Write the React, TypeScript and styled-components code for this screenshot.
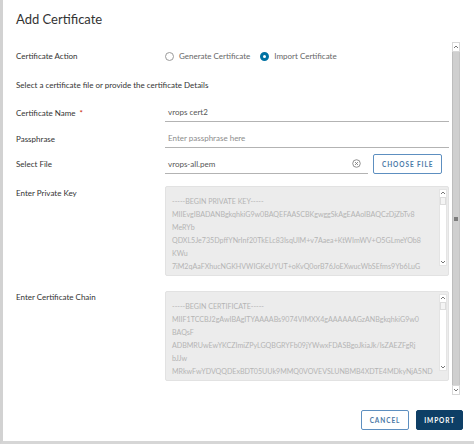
import React from 'react'
import styled, { createGlobalStyle } from 'styled-components'

const GlobalStyle = createGlobalStyle`
  html, body {
    margin: 0;
    padding: 0;
    background: #ffffff;
  }
  * {
    box-sizing: border-box;
  }
  body {
    font-family: Lato, 'Open Sans', sans-serif;
    color: #333;
  }
`

const Frame = styled.div`
  width: 474px;
  height: 444px;
  background: #fff;
  border-left: 3px solid #d2d2d2;
  border-bottom: 3px solid #d6d6d6;
  display: flex;
  flex-direction: column;
`

const Header = styled.div`
  height: 42px;
  padding: 10px 0 0 13px;
`

const Title = styled.h2`
  margin: 0;
  font-size: 13px;
  line-height: 18px;
  font-weight: 400;
  color: #333;
`

const Body = styled.div`
  display: flex;
  height: 353px;
  padding-left: 13px;
`

const Form = styled.div`
  width: 433px;
  display: flex;
  flex-direction: column;
`

const Row = styled.div<{ $top: number; $height?: number; $align?: string }>`
  display: flex;
  align-items: ${(p) => p.$align ?? 'center'};
  margin-top: ${(p) => p.$top}px;
  height: ${(p) => (p.$height ? `${p.$height}px` : 'auto')};
`

const Label = styled.div<{ $pad?: number }>`
  width: 149px;
  flex-shrink: 0;
  font-size: 8px;
  color: #333;
  padding-top: ${(p) => p.$pad ?? 0}px;
  line-height: 12px;
`

const Required = styled.span`
  color: #c92100;
  margin-left: 4px;
`

const Hint = styled.div`
  font-size: 8px;
  line-height: 12px;
  color: #333;
`

const RadioGroup = styled.div`
  display: flex;
  align-items: center;
  gap: 10px;
`

const RadioOption = styled.label`
  display: flex;
  align-items: center;
  gap: 5px;
  font-size: 8px;
  color: #666;
`

const RadioDot = styled.span<{ $checked?: boolean }>`
  width: 9px;
  height: 9px;
  border-radius: 50%;
  background: #fff;
  border: ${(p) => (p.$checked ? '3px solid #0072a3' : '1px solid #9a9a9a')};
`

const Field = styled.div<{ $width?: number }>`
  width: ${(p) => p.$width ?? 284}px;
  height: 19px;
  display: flex;
  align-items: center;
  justify-content: space-between;
  border-bottom: 1px solid #b3b3b3;
  padding: 0 7px 0 3px;
  font-size: 8px;
`

const Value = styled.span<{ $placeholder?: boolean }>`
  color: ${(p) => (p.$placeholder ? '#8c8c8c' : '#555')};
`

const ClearIcon = styled.svg`
  width: 9px;
  height: 9px;
`

const OutlineButton = styled.button<{ $ml?: number }>`
  height: 20px;
  padding: 0 8px;
  margin-left: ${(p) => p.$ml ?? 0}px;
  background: #fff;
  border: 1px solid #5d8fc0;
  border-radius: 2px;
  color: #4a79a6;
  font-family: inherit;
  font-size: 6.5px;
  font-weight: 700;
  letter-spacing: 0.9px;
`

const SolidButton = styled.button`
  height: 20px;
  padding: 0 7px;
  background: #0e3f66;
  border: 1px solid #0e3f66;
  border-radius: 2px;
  color: #fff;
  font-family: inherit;
  font-size: 6.5px;
  font-weight: 700;
  letter-spacing: 0.9px;
`

const TextBox = styled.div<{ $height: number }>`
  width: 284px;
  height: ${(p) => p.$height}px;
  background: #ececec;
  border: 1px solid #e2e2e2;
  border-radius: 2px;
  display: flex;
  padding: 2px 1px 0 0;
`

const TextLines = styled.div`
  flex: 1;
  padding: 6px 0 0 6px;
  font-size: 7.1px;
  line-height: 13px;
  color: #b4b4b4;
  white-space: nowrap;
  overflow: hidden;
`

const MiniScroll = styled.div`
  width: 8px;
  height: 77px;
  background: #fff;
  border: 1px solid #e4e4e4;
  display: flex;
  flex-direction: column;
  justify-content: space-between;
  align-items: center;
`

const MiniThumb = styled.div`
  width: 6px;
  height: 8px;
  background: #f4f4f4;
  border: 1px solid #dcdcdc;
  margin-top: 1px;
`

const Arrow = styled.svg`
  width: 6px;
  height: 6px;
  display: block;
`

const PageScroll = styled.div`
  width: 8px;
  margin-left: 3px;
  display: flex;
  flex-direction: column;
`

const ScrollButton = styled.div`
  height: 10px;
  background: #fff;
  border: 1px solid #d8d8d8;
  display: flex;
  align-items: center;
  justify-content: center;
`

const ScrollTrack = styled.div`
  flex: 1;
  background: #cfcfcf;
  border-left: 1px solid #bdbdbd;
  border-right: 1px solid #c4c4c4;
  display: flex;
  align-items: center;
  justify-content: center;
`

const Grip = styled.div`
  width: 4px;
  height: 4px;
  background: #7c7c7c;
`

const Footer = styled.div`
  display: flex;
  justify-content: flex-end;
  gap: 7px;
  padding: 15px 11px 0 0;
`

const Up = () => (
  <Arrow viewBox="0 0 6 6">
    <path d="M1 4 L3 2 L5 4" fill="none" stroke="#777" strokeWidth="1" />
  </Arrow>
)

const Down = () => (
  <Arrow viewBox="0 0 6 6">
    <path d="M1 2 L3 4 L5 2" fill="none" stroke="#777" strokeWidth="1" />
  </Arrow>
)

const privateKey = [
  '-----BEGIN PRIVATE KEY-----',
  'MIIEvgIBADANBgkqhkiG9w0BAQEFAASCBKgwggSkAgEAAoIBAQCzDjZbTv8',
  'MeRYb',
  'QDXL5Je735DpffYNrInf20TkELc83IsqUlM+v7Aaea+KtWImWV+O5GLmeYOb8',
  'KWu',
  '7iM2qAaFXhucNGKHVWIGKeUYUT+oKvQ0orB76JoEXwucWbSEfms9Yb6LuG',
]

const certChain = [
  '-----BEGIN CERTIFICATE-----',
  'MIIF1TCCBJ2gAwIBAgITYAAAABs9074VIMXX4gAAAAAAGzANBgkqhkiG9w0',
  'BAQsF',
  'ADBMRUwEwYKCZImiZPyLGQBGRYFb09jYWwxFDASBgoJkiaJk/IsZAEZFgRj',
  'bJJw',
  'MRkwFwYDVQQDExBDT05UUk9MMQ0VOVEVSLUNBMB4XDTE4MDkyNjA5ND',
]

const KeyBox = ({ lines, height }: { lines: string[]; height: number }) => (
  <TextBox $height={height}>
    <TextLines>
      {lines.map((line, i) => (
        <div key={i}>{line}</div>
      ))}
    </TextLines>
    <MiniScroll>
      <div>
        <Up />
        <MiniThumb />
      </div>
      <Down />
    </MiniScroll>
  </TextBox>
)

export default function App() {
  return (
    <>
      <GlobalStyle />
      <Frame>
        <Header>
          <Title>Add Certificate</Title>
        </Header>
        <Body>
          <Form>
            <Row $top={7} $height={14}>
              <Label>Certificate Action</Label>
              <RadioGroup>
                <RadioOption>
                  <RadioDot />
                  Generate Certificate
                </RadioOption>
                <RadioOption>
                  <RadioDot $checked />
                  Import Certificate
                </RadioOption>
              </RadioGroup>
            </Row>

            <Row $top={16} $height={12}>
              <Hint>Select a certificate file or provide the certificate Details</Hint>
            </Row>

            <Row $top={12}>
              <Label>
                Certificate Name<Required>*</Required>
              </Label>
              <Field>
                <Value>vrops cert2</Value>
              </Field>
            </Row>

            <Row $top={7}>
              <Label>Passphrase</Label>
              <Field>
                <Value $placeholder>Enter passphrase here</Value>
              </Field>
            </Row>

            <Row $top={6}>
              <Label>Select File</Label>
              <Field $width={203}>
                <Value>vrops-all.pem</Value>
                <ClearIcon viewBox="0 0 10 10">
                  <circle cx="5" cy="5" r="4.2" fill="none" stroke="#777" strokeWidth="0.9" />
                  <path d="M3.3 3.3 L6.7 6.7 M6.7 3.3 L3.3 6.7" stroke="#777" strokeWidth="0.9" />
                </ClearIcon>
              </Field>
              <OutlineButton $ml={5}>CHOOSE FILE</OutlineButton>
            </Row>

            <Row $top={12} $align="flex-start">
              <Label $pad={1}>Enter Private Key</Label>
              <KeyBox lines={privateKey} height={90} />
            </Row>

            <Row $top={15} $align="flex-start">
              <Label $pad={0}>Enter Certificate Chain</Label>
              <KeyBox lines={certChain} height={90} />
            </Row>
          </Form>
          <PageScroll>
            <ScrollButton>
              <Up />
            </ScrollButton>
            <ScrollTrack>
              <Grip />
            </ScrollTrack>
            <ScrollButton>
              <Down />
            </ScrollButton>
          </PageScroll>
        </Body>
        <Footer>
          <OutlineButton>CANCEL</OutlineButton>
          <SolidButton>IMPORT</SolidButton>
        </Footer>
      </Frame>
    </>
  )
}
